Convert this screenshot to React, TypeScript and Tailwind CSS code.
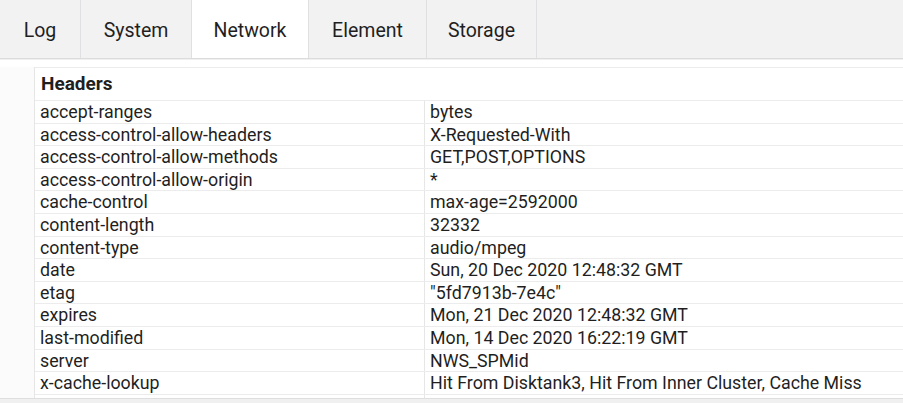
import React from 'react';

const tabs = [
  { label: 'Log', w: 'w-[81px]' },
  { label: 'System', w: 'w-[111px]' },
  { label: 'Network', w: 'w-[117px]', active: true },
  { label: 'Element', w: 'w-[118px]' },
  { label: 'Storage', w: 'w-[110px]' },
];

const headers: [string, string][] = [
  ['accept-ranges', 'bytes'],
  ['access-control-allow-headers', 'X-Requested-With'],
  ['access-control-allow-methods', 'GET,POST,OPTIONS'],
  ['access-control-allow-origin', '*'],
  ['cache-control', 'max-age=2592000'],
  ['content-length', '32332'],
  ['content-type', 'audio/mpeg'],
  ['date', 'Sun, 20 Dec 2020 12:48:32 GMT'],
  ['etag', '"5fd7913b-7e4c"'],
  ['expires', 'Mon, 21 Dec 2020 12:48:32 GMT'],
  ['last-modified', 'Mon, 14 Dec 2020 16:22:19 GMT'],
  ['server', 'NWS_SPMid'],
  ['x-cache-lookup', 'Hit From Disktank3, Hit From Inner Cluster, Cache Miss'],
  ['x-nws-log-uuid', 'b2c0f7a1-1'],
];

const App: React.FC = () => {
  return (
    <div
      className="w-[903px] h-[403px] overflow-hidden bg-white text-[#1f1f1f] flex flex-col relative"
      style={{ fontFamily: 'Roboto, "Noto Sans", sans-serif' }}
    >
      {/* Tab bar */}
      <div className="h-[59px] shrink-0 flex bg-[#f2f2f3] border-b border-[#dcdcdc]">
        {tabs.map((t) => (
          <div
            key={t.label}
            className={`${t.w} h-full flex items-center justify-center pt-[3px] text-[19.5px] border-r border-[#e0e0e2] ${
              t.active ? 'bg-white' : ''
            }`}
          >
            {t.label}
          </div>
        ))}
        <div className="flex-1" />
      </div>

      {/* Content */}
      <div className="flex-1 flex min-h-0 pt-[7px] border-t border-[#f0f0f0]">
        <div className="w-[34px] shrink-0 bg-[#fcfbfc]" />
        <div className="flex-1 border-l border-[#e6e6e6] min-w-0">
          <div className="h-[34px] flex items-center pl-[6px] text-[19px] font-bold border-t border-b border-[#ececec]">
            Headers
          </div>
          {headers.map(([k, v]) => (
            <div key={k} className="h-[22.6px] flex border-b border-[#ececec] text-[17.8px] leading-[22px]">
              <div className="w-[390px] shrink-0 pl-[5px] border-r border-[#e6e6e6] whitespace-nowrap overflow-hidden">
                {k}
              </div>
              <div className="flex-1 pl-[5px] whitespace-nowrap overflow-hidden">{v}</div>
            </div>
          ))}
        </div>
      </div>

      {/* Bottom edge */}
      <div className="absolute left-0 right-0 bottom-0 h-[5px] bg-[#f0f0f0] border-t border-[#dedede]" />
    </div>
  );
};

export default App;
